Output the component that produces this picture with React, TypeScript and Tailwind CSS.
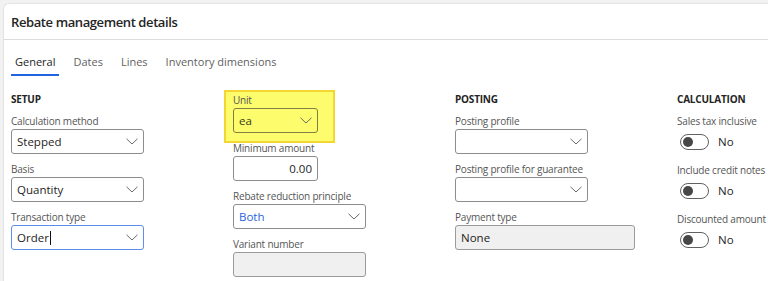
import React from 'react';

const font = { fontFamily: '"Open Sans", "Noto Sans", sans-serif' };

function Chevron() {
  return (
    <svg width="12" height="7" viewBox="0 0 12 7" className="shrink-0">
      <polyline points="0.5,0.8 6,6 11.5,0.8" fill="none" stroke="#6b6b6b" strokeWidth="1" />
    </svg>
  );
}

function Label({ children }: { children: React.ReactNode }) {
  return (
    <div className="h-[14px] text-[10px] leading-[14px] tracking-[-0.2px] text-[#555555] whitespace-nowrap">
      {children}
    </div>
  );
}

function SectionHeading({ children }: { children: React.ReactNode }) {
  return (
    <div className="mt-[2px] mb-[8px] h-[14px] text-[10px] leading-[14px] font-bold tracking-[-0.2px] text-[#242424]">
      {children}
    </div>
  );
}

interface DropdownProps {
  label: string;
  value?: string;
  width?: string;
  valueClass?: string;
  focused?: boolean;
}

function Dropdown({ label, value = '', width = 'w-[133px]', valueClass = 'text-[#242424]', focused }: DropdownProps) {
  return (
    <div className="mb-[8px]">
      <Label>{label}</Label>
      <div
        className={`mt-[1px] h-[25px] ${width} rounded-[3px] border bg-white flex items-center justify-between pl-[5px] pr-[5px] ${
          focused ? 'border-[#5b8ef0]' : 'border-[#8d8d8d]'
        }`}
      >
        <span className={`text-[11.5px] leading-none ${valueClass} flex items-center`}>
          {value}
          {focused && <span className="ml-[1px] inline-block h-[14px] w-px bg-[#111]" />}
        </span>
        <Chevron />
      </div>
    </div>
  );
}

function TextField({ label, value = '', width = 'w-[85px]', disabled, right }: { label: string; value?: string; width?: string; disabled?: boolean; right?: boolean }) {
  return (
    <div className="mb-[8px]">
      <Label>{label}</Label>
      <div
        className={`mt-[1px] h-[25px] ${width} rounded-[3px] border flex items-center px-[5px] text-[11.5px] text-[#242424] ${
          disabled ? 'bg-[#f0f0f0] border-[#9a9a9a]' : 'bg-white border-[#8d8d8d]'
        } ${right ? 'justify-end' : ''}`}
      >
        {value}
      </div>
    </div>
  );
}

function Toggle({ label }: { label: string }) {
  return (
    <div className="mb-[13px]">
      <Label>{label}</Label>
      <div className="mt-[6px] ml-[3px] flex items-center gap-[9px]">
        <div className="h-[16px] w-[29px] rounded-full border border-[#616161] flex items-center pl-[2px]">
          <div className="h-[10px] w-[10px] rounded-full bg-[#474747]" />
        </div>
        <span className="text-[11.5px] leading-none text-[#242424]">No</span>
      </div>
    </div>
  );
}

const tabs = ['General', 'Dates', 'Lines', 'Inventory dimensions'];

export default function App() {
  return (
    <div className="h-[281px] w-[768px] overflow-hidden bg-[#f2f2f2] pl-[3px] pt-[3px]" style={font}>
      <div className="h-full rounded-tl-[6px] border-l border-t border-[#e4e4e4] bg-white">
        <div className="flex h-[36px] items-center border-b border-[#dcdcdc] pl-[7px] pt-[3px]">
          <h1 className="text-[13px] font-semibold tracking-[-0.4px] text-[#242424]">Rebate management details</h1>
        </div>

        <div className="flex gap-[10px] pl-[7px] pt-[12px]">
          {tabs.map((tab, i) => (
            <div
              key={tab}
              className={`px-[4px] pb-[2px] text-[11px] leading-[20px] border-b-2 ${
                i === 0 ? 'border-[#1f63e0] text-[#242424]' : 'border-transparent text-[#5f5f5f]'
              }`}
            >
              {tab}
            </div>
          ))}
        </div>

        <div className="flex pl-[7px] pt-[14px]">
          <div className="w-[222px] shrink-0">
            <SectionHeading>SETUP</SectionHeading>
            <Dropdown label="Calculation method" value="Stepped" />
            <Dropdown label="Basis" value="Quantity" />
            <Dropdown label="Transaction type" value="Order" focused />
          </div>

          <div className="w-[222px] shrink-0">
            <div className="-ml-[9px] -mb-[2px] w-[111px] border-2 border-[#f3d634] bg-[#fcfc6c] pl-[7px] pt-[1px] pb-[8px]">
              <Label>Unit</Label>
              <div className="mt-[1px] flex h-[25px] w-[85px] items-center justify-between rounded-[3px] border border-[#7f7f45] pl-[5px] pr-[5px]">
                <span className="text-[11.5px] leading-none text-[#3b3b1c]">ea</span>
                <Chevron />
              </div>
            </div>
            <TextField label="Minimum amount" value="0.00" right />
            <Dropdown label="Rebate reduction principle" value="Both" valueClass="text-[#2a64e0]" />
            <TextField label="Variant number" width="w-[133px]" disabled />
          </div>

          <div className="w-[222px] shrink-0">
            <SectionHeading>POSTING</SectionHeading>
            <Dropdown label="Posting profile" />
            <Dropdown label="Posting profile for guarantee" />
            <TextField label="Payment type" value="None" width="w-[180px]" disabled />
          </div>

          <div className="flex-1">
            <SectionHeading>CALCULATION</SectionHeading>
            <Toggle label="Sales tax inclusive" />
            <Toggle label="Include credit notes" />
            <Toggle label="Discounted amount" />
          </div>
        </div>
      </div>
    </div>
  );
}
